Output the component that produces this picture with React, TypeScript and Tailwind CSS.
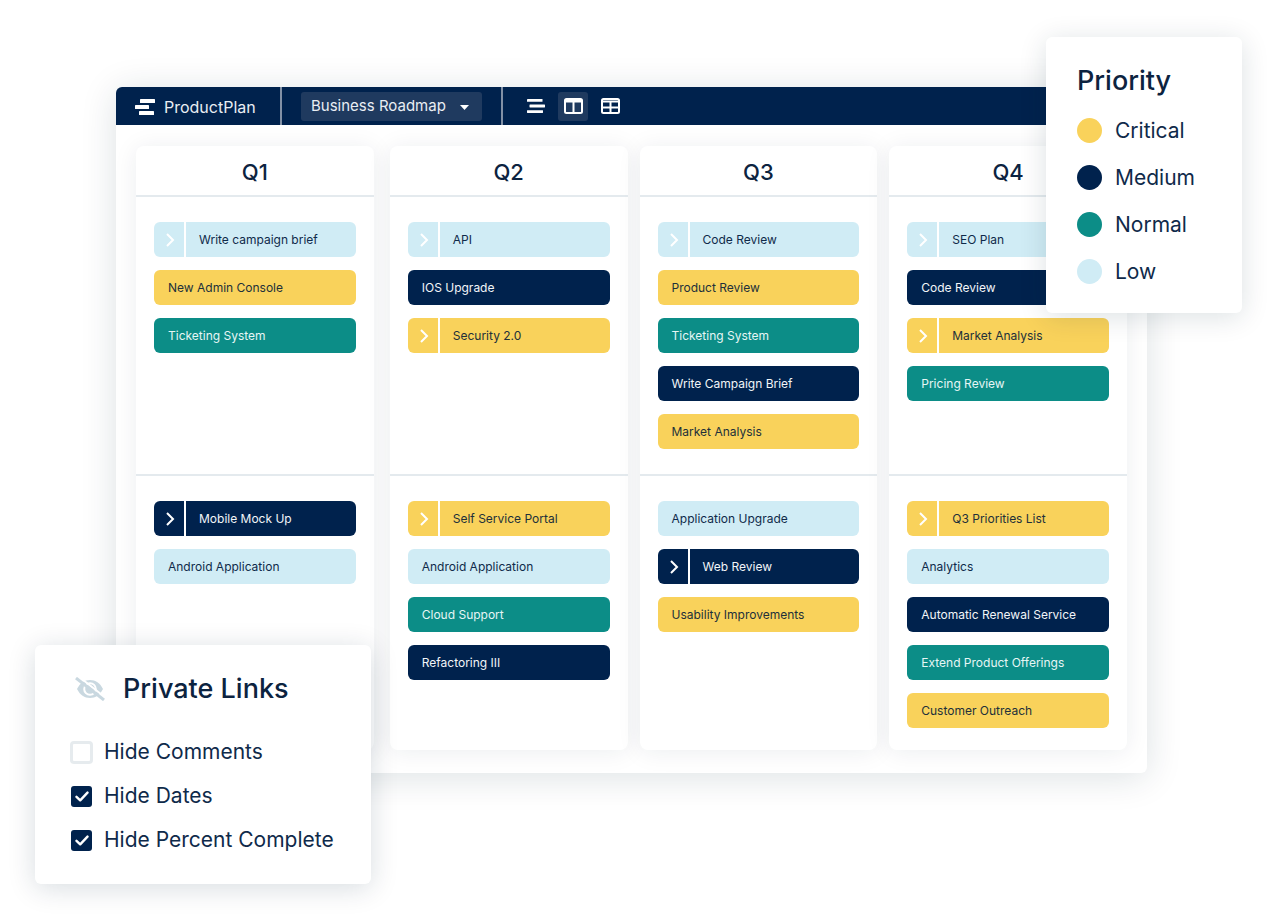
import { useState } from "react";
import clsx from "clsx";

type Priority = "critical" | "medium" | "normal" | "low";

type Item = {
  name: string;
  priority: Priority;
  expandable?: boolean;
};

const barColors: Record<Priority, string> = {
  critical: "bg-[#f9d25b] text-[#22303a]",
  medium: "bg-[#00224d] text-[#f2f5f8]",
  normal: "bg-[#0c8d87] text-[#e6f6f5]",
  low: "bg-[#d0ecf5] text-[#0f2a4a]",
};

const columns: { quarter: string; lanes: Item[][] }[] = [
  {
    quarter: "Q1",
    lanes: [
      [
        { name: "Write campaign brief", priority: "low", expandable: true },
        { name: "New Admin Console", priority: "critical" },
        { name: "Ticketing System", priority: "normal" },
      ],
      [
        { name: "Mobile Mock Up", priority: "medium", expandable: true },
        { name: "Android Application", priority: "low" },
      ],
    ],
  },
  {
    quarter: "Q2",
    lanes: [
      [
        { name: "API", priority: "low", expandable: true },
        { name: "IOS Upgrade", priority: "medium" },
        { name: "Security 2.0", priority: "critical", expandable: true },
      ],
      [
        { name: "Self Service Portal", priority: "critical", expandable: true },
        { name: "Android Application", priority: "low" },
        { name: "Cloud Support", priority: "normal" },
        { name: "Refactoring III", priority: "medium" },
      ],
    ],
  },
  {
    quarter: "Q3",
    lanes: [
      [
        { name: "Code Review", priority: "low", expandable: true },
        { name: "Product Review", priority: "critical" },
        { name: "Ticketing System", priority: "normal" },
        { name: "Write Campaign Brief", priority: "medium" },
        { name: "Market Analysis", priority: "critical" },
      ],
      [
        { name: "Application Upgrade", priority: "low" },
        { name: "Web Review", priority: "medium", expandable: true },
        { name: "Usability Improvements", priority: "critical" },
      ],
    ],
  },
  {
    quarter: "Q4",
    lanes: [
      [
        { name: "SEO Plan", priority: "low", expandable: true },
        { name: "Code Review", priority: "medium" },
        { name: "Market Analysis", priority: "critical", expandable: true },
        { name: "Pricing Review", priority: "normal" },
      ],
      [
        { name: "Q3 Priorities List", priority: "critical", expandable: true },
        { name: "Analytics", priority: "low" },
        { name: "Automatic Renewal Service", priority: "medium" },
        { name: "Extend Product Offerings", priority: "normal" },
        { name: "Customer Outreach", priority: "critical" },
      ],
    ],
  },
];

const legend: { label: string; color: string }[] = [
  { label: "Critical", color: "bg-[#f9d25b]" },
  { label: "Medium", color: "bg-[#00224d]" },
  { label: "Normal", color: "bg-[#0c8d87]" },
  { label: "Low", color: "bg-[#d0ecf5]" },
];

function Bar({ item }: { item: Item }) {
  const color = barColors[item.priority];

  if (item.expandable) {
    return (
      <li className="flex h-[35px] gap-[2px] text-xs">
        <button
          type="button"
          aria-label={`Expand ${item.name}`}
          className={clsx("flex w-[30px] shrink-0 items-center justify-center rounded-l-md", color)}
        >
          <svg width="10" height="14" viewBox="0 0 10 14" fill="none" stroke="white" strokeWidth="2" className="ml-0.5">
            <path d="M2 1 8 7 2 13" />
          </svg>
        </button>
        <span className={clsx("flex min-w-0 flex-1 items-center whitespace-nowrap rounded-r-md pl-[13px]", color)}>
          {item.name}
        </span>
      </li>
    );
  }

  return (
    <li className={clsx("flex h-[35px] items-center whitespace-nowrap rounded-md pl-[14px] text-xs", color)}>
      {item.name}
    </li>
  );
}

function TopBar() {
  return (
    <header className="flex h-[38px] items-stretch rounded-tl-md bg-[#00224d] text-white">
      <a href="#" className="flex w-[164px] items-center gap-[9px] pl-[19px] pt-px text-base text-[#e9eef3]">
        <svg width="20" height="16" viewBox="0 0 20 16" fill="white">
          <rect x="5" y="0" width="15" height="4" rx="0.6" />
          <rect x="0" y="6" width="14" height="4" rx="0.6" />
          <rect x="4" y="12" width="15" height="4" rx="0.6" />
        </svg>
        ProductPlan
      </a>
      <div className="flex items-center border-x-2 border-[#8291a6] px-[19px]">
        <div className="relative">
          <select
            aria-label="Roadmap"
            className="h-[29px] w-[181px] appearance-none rounded-[3px] bg-[#1f3a5f] pl-[10px] text-[15px] text-[#e9eef3]"
          >
            <option>Business Roadmap</option>
          </select>
          <svg
            width="9"
            height="5"
            viewBox="0 0 9 5"
            fill="white"
            className="pointer-events-none absolute right-[13px] top-[13px]"
          >
            <path d="M0 0h9L4.5 5z" />
          </svg>
        </div>
      </div>
      <nav aria-label="View" className="flex items-center gap-[7px] pl-[18px]">
        <button type="button" aria-label="List view" className="flex h-[29px] w-[30px] items-center justify-center">
          <svg width="18" height="14" viewBox="0 0 18 14" fill="white">
            <rect x="0" y="0" width="15.5" height="2.8" rx="0.4" />
            <rect x="2.5" y="5.6" width="15.5" height="2.8" rx="0.4" />
            <rect x="0" y="11.2" width="16" height="2.8" rx="0.4" />
          </svg>
        </button>
        <button
          type="button"
          aria-label="Board view"
          aria-pressed="true"
          className="flex h-[29px] w-[30px] items-center justify-center rounded-[3px] bg-[#1f3a5f]"
        >
          <svg width="19" height="16" viewBox="0 0 19 16" fill="none" stroke="white" strokeWidth="2">
            <rect x="1" y="1" width="17" height="14" rx="1.5" />
            <path d="M1 3.4h17M9.5 4v11" />
            <path d="M1 2.4h17" />
          </svg>
        </button>
        <button type="button" aria-label="Table view" className="flex h-[29px] w-[30px] items-center justify-center">
          <svg width="19" height="16" viewBox="0 0 19 16" fill="none" stroke="white" strokeWidth="2">
            <rect x="1" y="1" width="17" height="14" rx="1.5" />
            <path d="M1 3.4h17M9.5 4v11M1 9.4h17" />
          </svg>
        </button>
      </nav>
    </header>
  );
}

function PriorityCard() {
  return (
    <aside className="absolute -right-[95px] -top-[50px] w-[196px] rounded-md bg-white pb-[18px] pl-[31px] pt-7 shadow-[0_4px_28px_rgba(0,40,60,0.14)]">
      <h2 className="text-[27px] font-medium leading-[32px] text-[#0c2340]">Priority</h2>
      <ul className="mt-[10px]">
        {legend.map((l) => (
          <li key={l.label} className="flex h-[47px] items-center gap-[13px] text-[21px] text-[#0f2a4a]">
            <span className={clsx("size-[25px] rounded-full", l.color)} />
            {l.label}
          </li>
        ))}
      </ul>
    </aside>
  );
}

function PrivateLinksCard() {
  const [options, setOptions] = useState([
    { label: "Hide Comments", checked: false },
    { label: "Hide Dates", checked: true },
    { label: "Hide Percent Complete", checked: true },
  ]);

  const toggle = (index: number) =>
    setOptions(options.map((o, i) => (i === index ? { ...o, checked: !o.checked } : o)));

  return (
    <aside className="absolute -bottom-[111px] -left-[81px] w-[336px] rounded-md bg-white pb-[22px] pl-[35px] pt-7 shadow-[0_4px_28px_rgba(0,40,60,0.16)]">
      <h2 className="flex items-center gap-[18px] pl-[5px] text-[27px] font-medium leading-[32px] text-[#0c2340]">
        <svg width="30" height="24" viewBox="0 0 30 24" fill="none">
          <path d="M2 12C5 6 9.5 3 15 3s10 3 13 9c-3 6-7.5 9-13 9S5 18 2 12z" fill="#c9d8e0" />
          <circle cx="15" cy="12" r="5.8" stroke="white" strokeWidth="2" />
          <path d="M3 -1 31 21" stroke="white" strokeWidth="2" />
          <path d="M1 1 29 23" stroke="#c9d8e0" strokeWidth="3" />
        </svg>
        Private Links
      </h2>
      <div className="mt-[25px]">
        {options.map((o, i) => (
          <label key={o.label} className="flex h-11 items-center gap-[11px] whitespace-nowrap text-[21px] text-[#0f2a4a]">
            <span className="relative flex size-[23px] items-center justify-center">
              <input
                type="checkbox"
                checked={o.checked}
                onChange={() => toggle(i)}
                className="size-[23px] appearance-none rounded border-[3px] border-[#e6ebee] bg-white checked:size-[21px] checked:rounded-[3px] checked:border-0 checked:bg-[#00224d]"
              />
              {o.checked && (
                <svg
                  width="14"
                  height="11"
                  viewBox="0 0 14 11"
                  fill="none"
                  stroke="white"
                  strokeWidth="2.4"
                  strokeLinecap="round"
                  strokeLinejoin="round"
                  className="pointer-events-none absolute"
                >
                  <path d="M1.5 5.8 5.2 9.3 12.5 1.6" />
                </svg>
              )}
            </span>
            {o.label}
          </label>
        ))}
      </div>
    </aside>
  );
}

export default function App() {
  return (
    <main className="min-h-screen overflow-hidden bg-white pb-[150px] pl-[116px] pr-[133px] pt-[87px] font-['Inter',sans-serif]">
      <div className="relative rounded-md bg-white shadow-[0_4px_36px_rgba(0,40,60,0.14)]">
        <TopBar />
        <div className="flex gap-3 px-5 pb-[23px] pt-[21px]">
          {columns.map((col) => (
            <section
              key={col.quarter}
              className="min-w-0 flex-1 rounded-lg bg-white shadow-[0_2px_24px_rgba(0,40,70,0.08)] first:mr-1"
            >
              <h2 className="flex h-[51px] items-center justify-center border-b-2 border-[#e4eaee] pt-1 text-[22px] font-medium text-[#0c2340]">
                {col.quarter}
              </h2>
              {col.lanes.map((lane, i) => (
                <ul
                  key={i}
                  className="flex min-h-[274px] flex-col gap-[13px] px-[18px] pb-[22px] pt-[25px] first-of-type:min-h-[279px] first-of-type:border-b-2 first-of-type:border-[#e4eaee]"
                >
                  {lane.map((item) => (
                    <Bar key={item.name} item={item} />
                  ))}
                </ul>
              ))}
            </section>
          ))}
        </div>
        <PriorityCard />
        <PrivateLinksCard />
      </div>
    </main>
  );
}
